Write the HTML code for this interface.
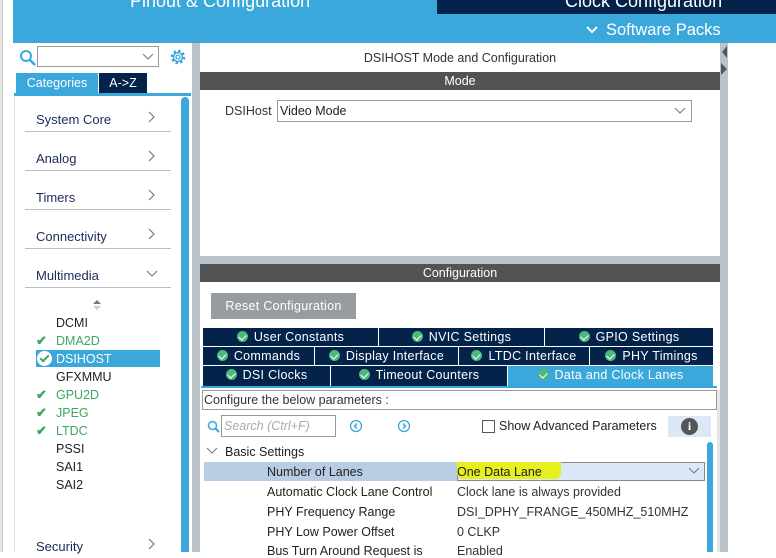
<!DOCTYPE html>
<html><head><meta charset="utf-8"><style>
*{margin:0;padding:0;box-sizing:border-box}
body{width:776px;height:552px;overflow:hidden;background:#fff;font-family:"Liberation Sans",sans-serif;position:relative;font-size:13px;color:#222}
.a{position:absolute}
.t{white-space:nowrap}
.cat{position:absolute;left:36px;font-size:13px;color:#1c2a5a}
.cl{position:absolute;left:25px;width:146px;height:1px;background:#b9c0c5}
.tab{position:absolute;height:18px;background:#03234b;color:#fff;font-size:12.5px;text-align:center;line-height:18px;border-right:1px solid #fff;letter-spacing:.3px}
.ck{display:inline-block;width:11px;height:11px;border-radius:50%;background:#4cb87a;vertical-align:-1px;margin-right:6px;position:relative}
.ck:after{content:"";position:absolute;left:3px;top:2px;width:4px;height:6px;border:solid #fff;border-width:0 1.5px 1.5px 0;transform:rotate(45deg)}
.mi{position:absolute;left:56px;font-size:12.5px;color:#222}
.g{color:#3aa860}
.gc{position:absolute;left:36px;color:#3aa860;font-size:13px;font-weight:bold}
.pl{position:absolute;left:267px;font-size:12.5px;color:#222}
.pv{position:absolute;left:457px;font-size:12.5px;color:#333}
</style></head><body>
<div class="a" style="left:0;top:0;width:2px;height:552px;background:#e6e6e6"></div>
<div class="a" style="left:2px;top:0;width:1px;height:552px;background:#c8c8c8"></div>
<div class="a" style="left:13px;top:0;width:763px;height:43px;background:#3ba8db"></div>
<div class="a t" style="left:130px;top:-9px;color:#fff;font-size:18px">Pinout &amp; Configuration</div>
<div class="a" style="left:437px;top:0;width:339px;height:14px;background:#03234b"></div>
<div class="a t" style="left:565px;top:-9px;color:#fff;font-size:18px">Clock Configuration</div>
<svg class="a" style="left:585px;top:25px" width="14" height="10"><path d="M2 2l5 5 5-5" stroke="#fff" stroke-width="2" fill="none"/></svg>
<div class="a t" style="left:606px;top:21px;color:#fff;font-size:16.5px">Software Packs</div>

<svg class="a" style="left:19px;top:49px" width="18" height="18"><circle cx="7" cy="7" r="5" stroke="#3ba8db" stroke-width="2" fill="none"/><path d="M11 11l5 5" stroke="#3ba8db" stroke-width="2.5"/></svg>
<div class="a" style="left:37px;top:46px;width:122px;height:21px;border:1px solid #999"></div>
<svg class="a" style="left:142px;top:53px" width="12" height="8"><path d="M1 1l5 5 5-5" stroke="#777" fill="none"/></svg>
<svg class="a" style="left:169px;top:48px" width="18" height="18" viewBox="0 0 18 18"><circle cx="9" cy="9" r="6" stroke="#3ba8db" stroke-width="2.5" fill="none" stroke-dasharray="2.4 2.3"/><circle cx="9" cy="9" r="4.5" stroke="#3ba8db" stroke-width="1.5" fill="none"/><circle cx="9" cy="9" r="2" stroke="#3ba8db" stroke-width="1.3" fill="none"/></svg>
<div class="a t" style="left:16px;top:73px;width:82px;height:20px;background:#3ba8db;color:#fff;font-size:12.5px;text-align:center;line-height:20px">Categories</div>
<div class="a t" style="left:99px;top:73px;width:48px;height:20px;background:#03234b;color:#fff;font-size:12.5px;text-align:center;line-height:20px">A-&gt;Z</div>
<div class="a" style="left:14px;top:93px;width:177px;height:3px;background:#3ba8db"></div>
<div class="a" style="left:14px;top:96px;width:1px;height:456px;background:#ddd"></div>
<div class="a" style="left:181px;top:97px;width:8px;height:455px;background:#3ba8db;border-radius:4px 4px 0 0"></div>

<div class="cat" style="top:112px">System Core</div><div class="cl" style="top:131px"></div>
<div class="cat" style="top:151px">Analog</div><div class="cl" style="top:170px"></div>
<div class="cat" style="top:190px">Timers</div><div class="cl" style="top:209px"></div>
<div class="cat" style="top:229px">Connectivity</div><div class="cl" style="top:248px"></div>
<div class="cat" style="top:268px">Multimedia</div>
<svg class="a" style="left:148px;top:111px" width="8" height="140"><g stroke="#777" fill="none" stroke-width="1.2"><path d="M1 1l5 5-5 5"/><path d="M1 40l5 5-5 5"/><path d="M1 79l5 5-5 5"/><path d="M1 118l5 5-5 5"/></g></svg>
<svg class="a" style="left:148px;top:538px" width="8" height="12"><path d="M1 1l5 5-5 5" stroke="#777" fill="none" stroke-width="1.2"/></svg>
<svg class="a" style="left:146px;top:270px" width="12" height="8"><path d="M1 1l5 5 5-5" stroke="#777" fill="none"/></svg>
<div class="cl" style="top:287px"></div>
<svg class="a" style="left:93px;top:299px" width="8" height="12"><path d="M0 5l4-4 4 4z" fill="#777"/><path d="M0 7l4 4 4-4z" fill="#ccc"/></svg>
<div class="mi" style="top:316px">DCMI</div>
<div class="gc" style="top:333px">✔</div><div class="mi g" style="top:334px">DMA2D</div>
<div class="a" style="left:36px;top:350px;width:124px;height:17px;background:#3ba8db"></div>
<div class="a" style="left:37px;top:351px;width:15px;height:15px;border-radius:50%;background:#fff"></div>
<div class="a" style="left:42px;top:353px;width:5px;height:9px;border:solid #3aa860;border-width:0 2.5px 2.5px 0;transform:rotate(45deg)"></div>
<div class="mi" style="top:352px;color:#fff">DSIHOST</div>
<div class="mi" style="top:370px">GFXMMU</div>
<div class="gc" style="top:387px">✔</div><div class="mi g" style="top:388px">GPU2D</div>
<div class="gc" style="top:405px">✔</div><div class="mi g" style="top:406px">JPEG</div>
<div class="gc" style="top:423px">✔</div><div class="mi g" style="top:424px">LTDC</div>
<div class="mi" style="top:442px">PSSI</div>
<div class="mi" style="top:460px">SAI1</div>
<div class="mi" style="top:478px">SAI2</div>
<div class="cat" style="top:539px">Security</div>

<div class="a" style="left:192px;top:43px;width:8px;height:509px;background:#b9c3c9"></div>
<div class="a" style="left:720px;top:43px;width:8px;height:509px;background:#b9c3c9"></div>
<svg class="a" style="left:720px;top:44px" width="8" height="36"><path d="M7 2L2 8l5 6z" fill="#555"/><path d="M1 19l6 6-6 6z" fill="#555"/></svg>
<div class="a" style="left:200px;top:256px;width:520px;height:8px;background:#b9c3c9"></div>

<div class="a t" style="left:200px;top:51px;width:520px;text-align:center;font-size:12.5px;color:#333">DSIHOST Mode and Configuration</div>
<div class="a t" style="left:200px;top:72px;width:520px;height:18px;background:#525453;color:#fff;text-align:center;line-height:18px;font-size:12.5px">Mode</div>
<div class="a t" style="left:225px;top:104px;font-size:12.5px;color:#333">DSIHost</div>
<div class="a t" style="left:277px;top:100px;width:415px;height:22px;border:1px solid #999;padding-left:2px;line-height:20px;font-size:12.5px">Video Mode</div>
<svg class="a" style="left:674px;top:107px" width="12" height="8"><path d="M1 1l5 5 5-5" stroke="#777" fill="none"/></svg>

<div class="a t" style="left:200px;top:264px;width:520px;height:18px;background:#525453;color:#fff;text-align:center;line-height:18px;font-size:12.5px">Configuration</div>
<div class="a t" style="left:211px;top:293px;width:145px;height:26px;background:#979ca1;color:#fff;text-align:center;line-height:26px;font-size:12.5px;letter-spacing:.3px">Reset Configuration</div>

<div class="tab" style="left:203px;top:328px;width:176px"><span class="ck"></span>User Constants</div>
<div class="tab" style="left:379px;top:328px;width:166px"><span class="ck"></span>NVIC Settings</div>
<div class="tab" style="left:545px;top:328px;width:169px"><span class="ck"></span>GPIO Settings</div>
<div class="tab" style="left:203px;top:347px;width:112px"><span class="ck"></span>Commands</div>
<div class="tab" style="left:315px;top:347px;width:144px"><span class="ck"></span>Display Interface</div>
<div class="tab" style="left:459px;top:347px;width:131px"><span class="ck"></span>LTDC Interface</div>
<div class="tab" style="left:590px;top:347px;width:124px"><span class="ck"></span>PHY Timings</div>
<div class="tab" style="left:203px;top:366px;width:128px;height:20px"><span class="ck"></span>DSI Clocks</div>
<div class="tab" style="left:331px;top:366px;width:177px;height:20px"><span class="ck"></span>Timeout Counters</div>
<div class="tab" style="left:508px;top:366px;width:206px;height:20px;background:#3ba8db"><span class="ck"></span>Data and Clock Lanes</div>
<div class="a" style="left:201px;top:386px;width:516px;height:2px;background:#3ba8db"></div>
<div class="a t" style="left:202px;top:390px;width:515px;height:20px;border:1px solid #999;padding-left:1px;line-height:19px;font-size:12.5px;color:#333">Configure the below parameters :</div>

<svg class="a" style="left:207px;top:420px" width="13" height="13"><circle cx="5.5" cy="5.5" r="4" stroke="#3ba8db" stroke-width="1.6" fill="none"/><path d="M8.5 8.5l3.5 3.5" stroke="#3ba8db" stroke-width="2"/></svg>
<div class="a t" style="left:221px;top:415px;width:115px;height:22px;border:1px solid #999;padding-left:2px;line-height:21px;font-size:12.5px;color:#aaa;font-style:italic">Search (Ctrl+F)</div>
<svg class="a" style="left:349px;top:419px" width="14" height="14"><circle cx="7" cy="7" r="5.5" stroke="#3ba8db" stroke-width="1.3" fill="none"/><path d="M8 4.5L5.5 7 8 9.5" stroke="#3ba8db" stroke-width="1.5" fill="none"/></svg>
<svg class="a" style="left:397px;top:419px" width="14" height="14"><circle cx="7" cy="7" r="5.5" stroke="#3ba8db" stroke-width="1.3" fill="none"/><path d="M6 4.5L8.5 7 6 9.5" stroke="#3ba8db" stroke-width="1.5" fill="none"/></svg>
<div class="a" style="left:482px;top:420px;width:13px;height:13px;border:1px solid #555"></div>
<div class="a t" style="left:499px;top:419px;font-size:12.5px;color:#222">Show Advanced Parameters</div>
<div class="a" style="left:668px;top:416px;width:43px;height:21px;background:#dbe8f5"></div>
<div class="a" style="left:681px;top:418px;width:17px;height:17px;border-radius:50%;background:#555;color:#fff;font-weight:bold;text-align:center;line-height:17px;font-size:12px;font-family:'Liberation Serif',serif">i</div>

<svg class="a" style="left:206px;top:447px" width="12" height="8"><path d="M1 1l5 5 5-5" stroke="#777" fill="none"/></svg>
<div class="a t" style="left:225px;top:445px;font-size:12.5px;color:#222">Basic Settings</div>
<div class="a" style="left:204px;top:462px;width:253px;height:19px;background:#b8cce4"></div>
<div class="a" style="left:457px;top:462px;width:248px;height:19px;background:#dbe8f5;border:1px solid #888"></div>
<div class="a" style="left:457px;top:462px;width:104px;height:17px;background:#e6f01e;border-radius:0 0 6px 6px"></div>
<svg class="a" style="left:688px;top:467px" width="12" height="8"><path d="M1 1l5 5 5-5" stroke="#777" fill="none"/></svg>
<div class="a" style="left:707px;top:442px;width:6px;height:110px;background:#3ba8db;border-radius:3px 3px 0 0"></div>
<div class="a" style="left:717px;top:390px;width:3px;height:162px;background:#e6e6e6"></div>

<div class="pl t" style="top:465px">Number of Lanes</div><div class="pv t" style="top:465px;color:#222">One Data Lane</div>
<div class="pl t" style="top:485px">Automatic Clock Lane Control</div><div class="pv t" style="top:485px">Clock lane is always provided</div>
<div class="pl t" style="top:505px">PHY Frequency Range</div><div class="pv t" style="top:505px">DSI_DPHY_FRANGE_450MHZ_510MHZ</div>
<div class="pl t" style="top:525px">PHY Low Power Offset</div><div class="pv t" style="top:525px">0 CLKP</div>
<div class="pl t" style="top:544px">Bus Turn Around Request is</div><div class="pv t" style="top:544px">Enabled</div>
</body></html>
